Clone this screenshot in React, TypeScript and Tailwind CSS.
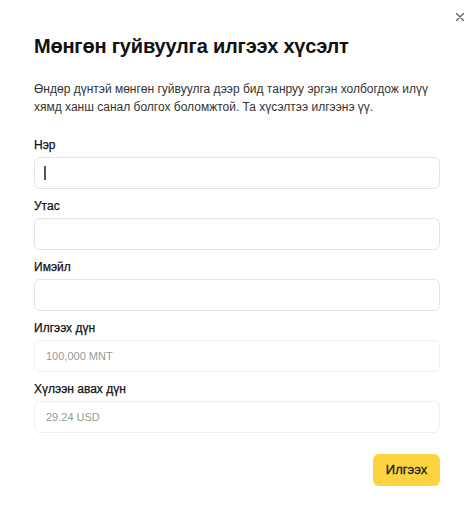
const fields = [
  { label: "Нэр", placeholder: "", focused: true },
  { label: "Утас", placeholder: "" },
  { label: "Имэйл", placeholder: "" },
  { label: "Илгээх дүн", placeholder: "100,000 MNT", readOnly: true },
  { label: "Хүлээн авах дүн", placeholder: "29.24 USD", readOnly: true },
];

export default function App() {
  return (
    <div
      className="relative w-[474px] h-[520px] bg-white text-[#111111]"
      style={{ fontFamily: '"Liberation Sans", Arial, sans-serif' }}
    >
      {/* Close */}
      <button
        type="button"
        aria-label="Close"
        className="absolute top-[13px] left-[456px] text-[#5a5a5a]"
      >
        <svg width="8" height="8" viewBox="0 0 8 8" fill="none">
          <path d="M0.5 0.5l7 7M7.5 0.5l-7 7" stroke="currentColor" strokeWidth="1.2" strokeLinecap="round" />
        </svg>
      </button>

      <div className="px-[34px] pt-[32px]">
        <h2 className="text-[20px] leading-[28px] font-bold tracking-[-0.2px]">
          Мөнгөн гуйвуулга илгээх хүсэлт
        </h2>

        <p className="mt-[20px] text-[12px] leading-[18px] text-[#333]">
          Өндөр дүнтэй мөнгөн гуйвуулга дээр бид танруу эргэн холбогдож илүү
          хямд ханш санал болгох боломжтой. Та хүсэлтээ илгээнэ үү.
        </p>

        <form className="mt-[21px] flex flex-col gap-[9px]">
          {fields.map((f) => (
            <div key={f.label} className="flex flex-col">
              <label className="text-[12px] leading-[16px] mb-[4px] text-[#111] [-webkit-text-stroke:0.25px_#111]">
                {f.label}
              </label>
              <div className="relative">
                <input
                  readOnly={f.readOnly}
                  placeholder={f.placeholder}
                  className={`w-full h-[32px] rounded-[6px] border bg-white px-[11px] text-[11px] text-[#222] placeholder:text-[#999] outline-none ${
                    f.readOnly ? "border-[#efefef]" : "border-[#e4e4e4]"
                  }`}
                />
                {f.focused && (
                  <span className="absolute left-[10px] top-[9px] w-[1.5px] h-[14px] bg-[#555]" />
                )}
              </div>
            </div>
          ))}
        </form>

        <div className="flex justify-end mt-[21px]">
          <button
            type="button"
            className="h-[32px] w-[67px] rounded-[6px] bg-[#fdd440] text-[13px] text-[#1a1a1a] [-webkit-text-stroke:0.3px_#1a1a1a]"
          >
            Илгээх
          </button>
        </div>
      </div>
    </div>
  );
}
